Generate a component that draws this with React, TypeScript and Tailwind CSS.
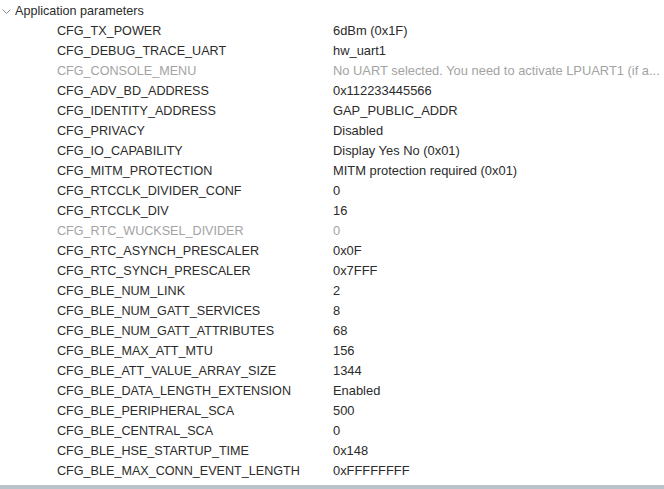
import React from 'react';

// Parameters list: [name, value, disabled]
const params: [string, string, boolean?][] = [
  ['CFG_TX_POWER', '6dBm (0x1F)'],
  ['CFG_DEBUG_TRACE_UART', 'hw_uart1'],
  ['CFG_CONSOLE_MENU', 'No UART selected. You need to activate LPUART1 (if a...', true],
  ['CFG_ADV_BD_ADDRESS', '0x112233445566'],
  ['CFG_IDENTITY_ADDRESS', 'GAP_PUBLIC_ADDR'],
  ['CFG_PRIVACY', 'Disabled'],
  ['CFG_IO_CAPABILITY', 'Display Yes No (0x01)'],
  ['CFG_MITM_PROTECTION', 'MITM protection required (0x01)'],
  ['CFG_RTCCLK_DIVIDER_CONF', '0'],
  ['CFG_RTCCLK_DIV', '16'],
  ['CFG_RTC_WUCKSEL_DIVIDER', '0', true],
  ['CFG_RTC_ASYNCH_PRESCALER', '0x0F'],
  ['CFG_RTC_SYNCH_PRESCALER', '0x7FFF'],
  ['CFG_BLE_NUM_LINK', '2'],
  ['CFG_BLE_NUM_GATT_SERVICES', '8'],
  ['CFG_BLE_NUM_GATT_ATTRIBUTES', '68'],
  ['CFG_BLE_MAX_ATT_MTU', '156'],
  ['CFG_BLE_ATT_VALUE_ARRAY_SIZE', '1344'],
  ['CFG_BLE_DATA_LENGTH_EXTENSION', 'Enabled'],
  ['CFG_BLE_PERIPHERAL_SCA', '500'],
  ['CFG_BLE_CENTRAL_SCA', '0'],
  ['CFG_BLE_HSE_STARTUP_TIME', '0x148'],
  ['CFG_BLE_MAX_CONN_EVENT_LENGTH', '0xFFFFFFFF'],
];

export default function App() {
  return (
    <div className="w-[664px] h-[489px] bg-white flex flex-col overflow-hidden font-['Liberation_Sans',Arial,sans-serif] text-[12.6px] text-[#2b2b2b]">
      <div className="flex-1 pt-[1px]">
        {/* Header */}
        <div className="h-5 flex items-center">
          <svg className="ml-[2px] w-[9px] h-[9px]" viewBox="0 0 9 9">
            <path d="M0.5 2.5 L4.5 6.5 L8.5 2.5" fill="none" stroke="#8a8a8a" strokeWidth="1" />
          </svg>
          <span className="ml-[4px]">Application parameters</span>
        </div>

        {params.map(([name, value, disabled]) => (
          <div
            key={name}
            className={`h-5 flex items-center whitespace-nowrap ${disabled ? 'text-[#a3a3a3]' : ''}`}
          >
            <span className="pl-[57px] w-[333px] shrink-0">{name}</span>
            <span className="text-[12.9px]">{value}</span>
          </div>
        ))}
      </div>
      <div className="h-[4px] bg-[#b9c3c9]" />
    </div>
  );
}
